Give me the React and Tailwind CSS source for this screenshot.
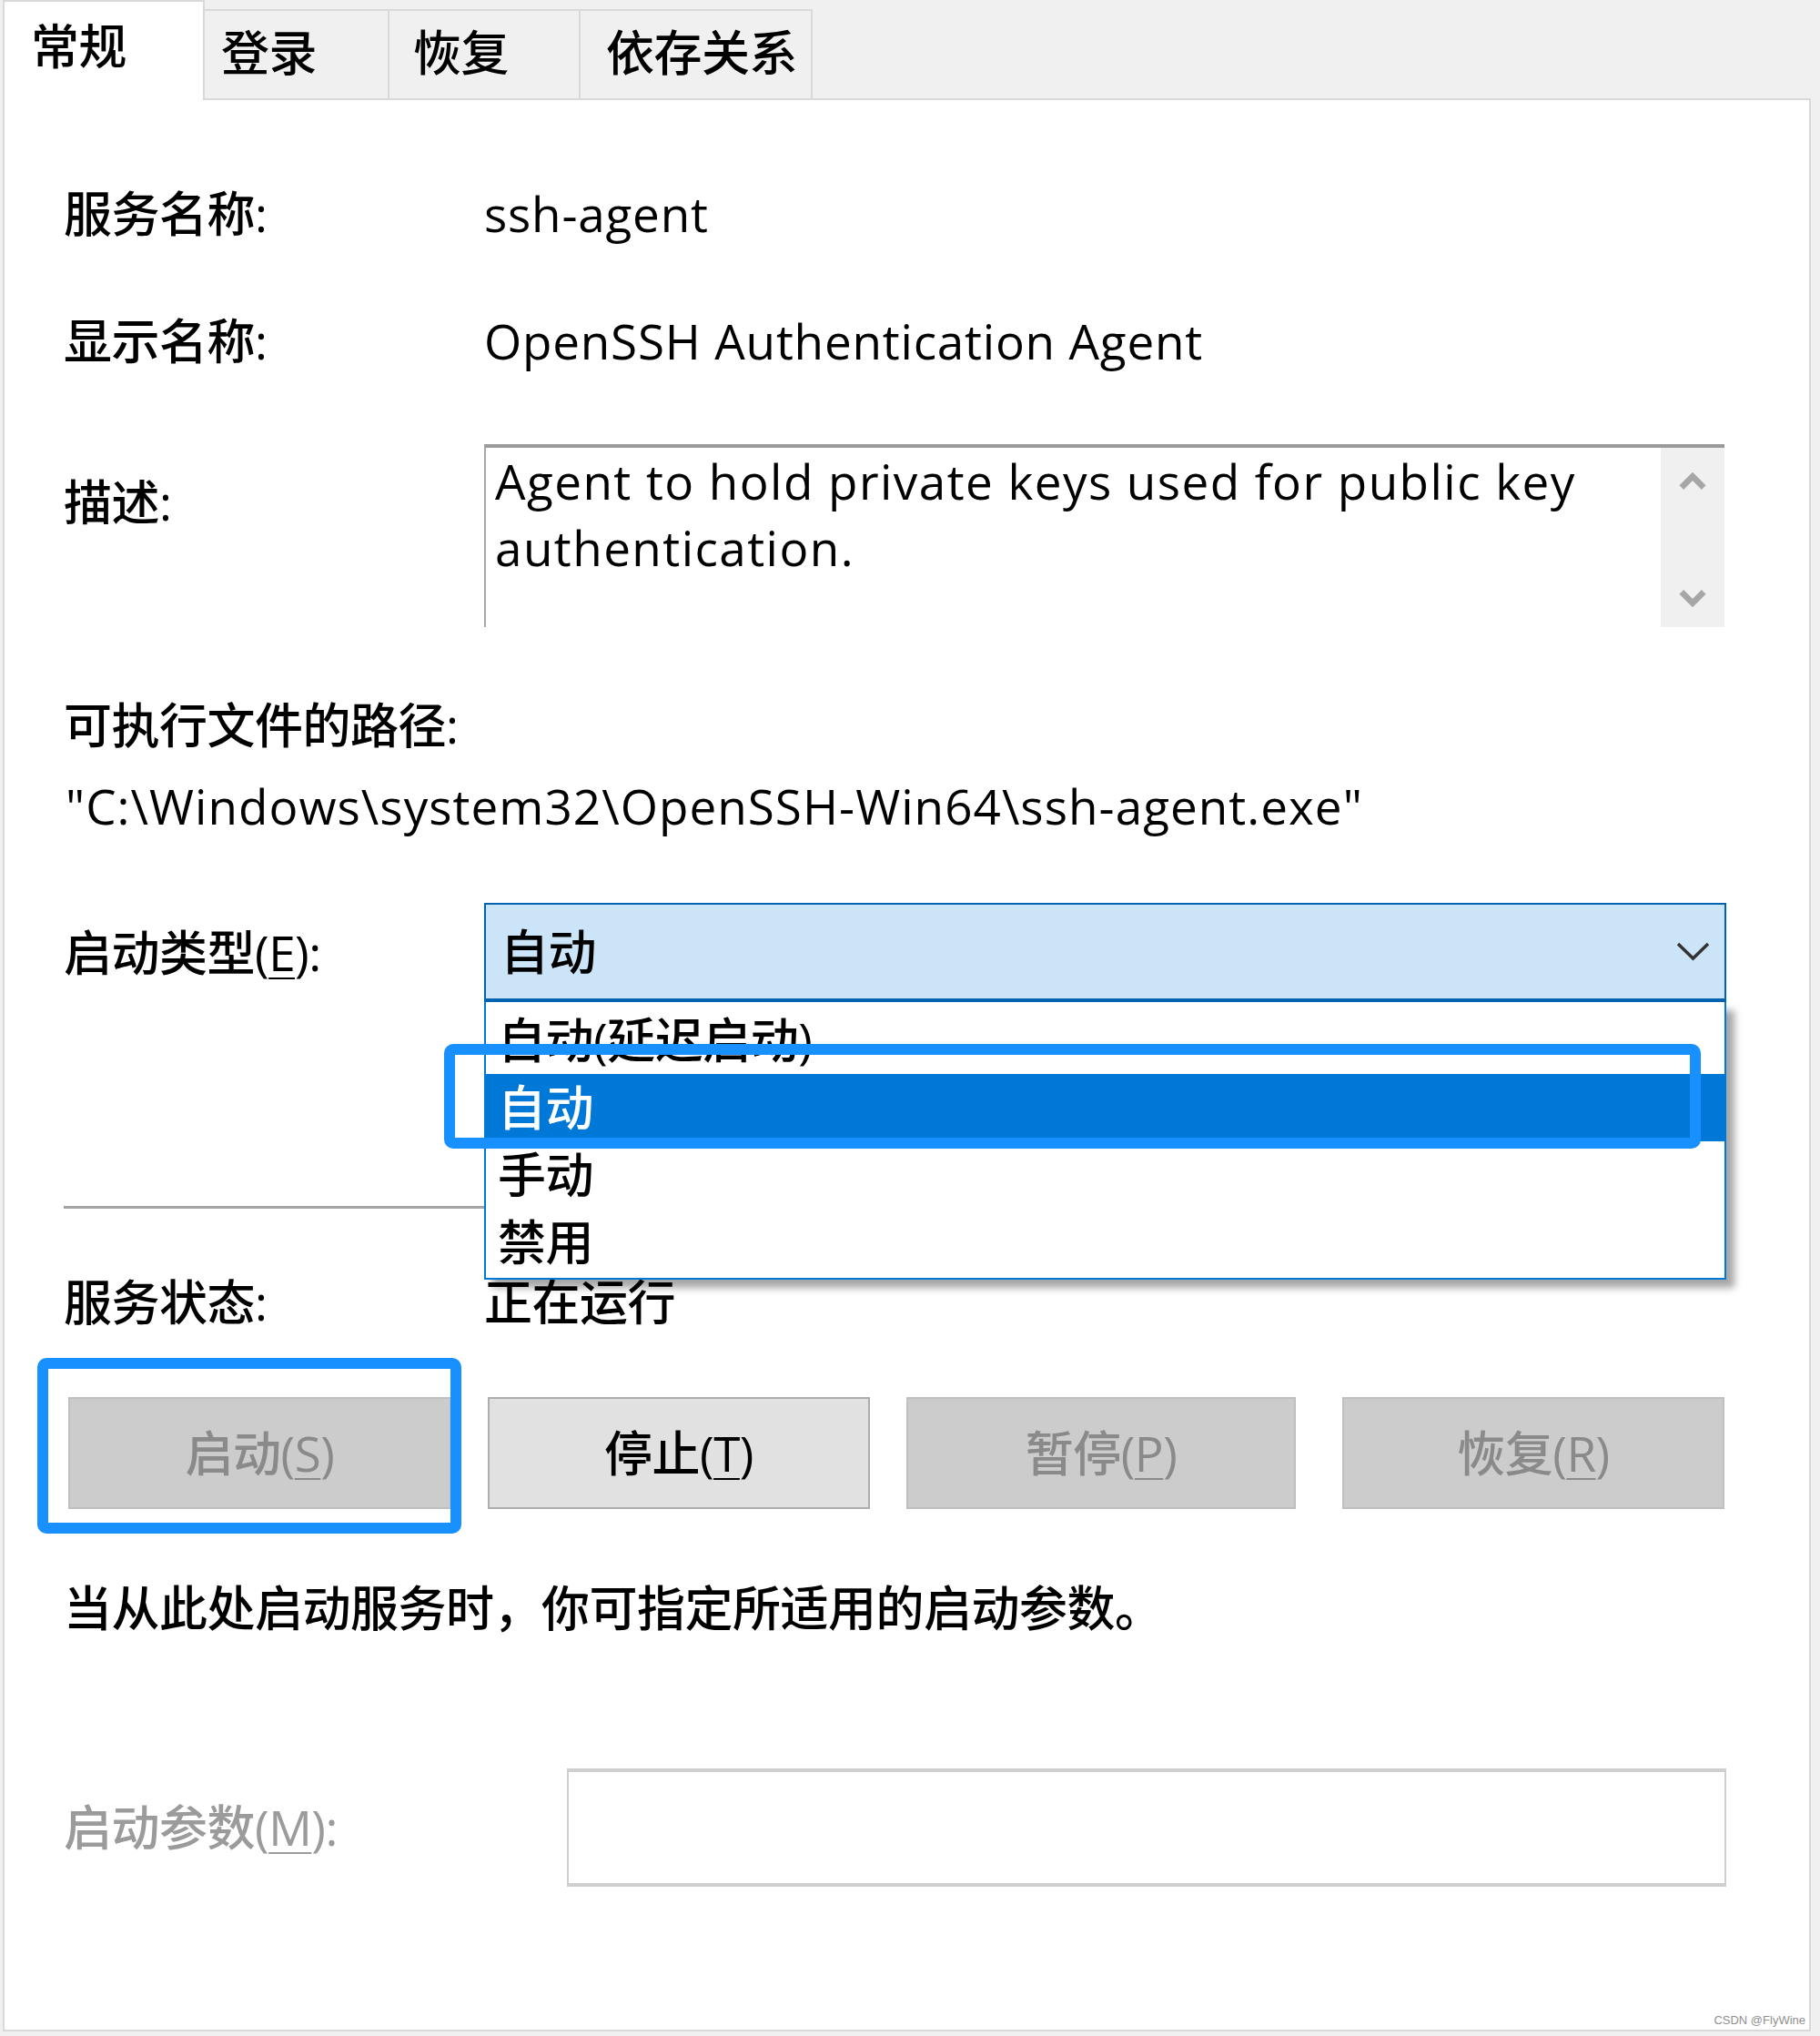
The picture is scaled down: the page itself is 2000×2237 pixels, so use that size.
import React from "react";

const tabs = [
  { name: "常规", active: true, cls: "w-[222px] pl-[29px]" },
  { name: "登录", cls: "w-[203px] pl-[18px]" },
  { name: "恢复", cls: "w-[210px] pl-[26px]" },
  { name: "依存关系", cls: "w-[255px] pl-[28px]" },
];

const startOptions = ["自动(延迟启动)", "自动", "手动", "禁用"];

function Key({ children }) {
  return <span className="underline underline-offset-[7px] decoration-[2px]">{children}</span>;
}

function Chevron({ up, className }) {
  return (
    <svg viewBox="0 0 32 20" className={className} fill="none">
      <polyline
        points={up ? "3,17 16,4 29,17" : "3,3 16,16 29,3"}
        stroke="currentColor"
        strokeWidth="7"
        strokeLinejoin="miter"
      />
    </svg>
  );
}

function FieldRow({ label, children, className = "" }) {
  return (
    <div className={`flex items-center h-[70px] ${className}`}>
      <div className="w-[462px] shrink-0">{label}</div>
      <div>{children}</div>
    </div>
  );
}

function ServiceButton({ label, hotkey, enabled, className = "" }) {
  return (
    <div
      className={`h-[123px] flex items-center justify-center border-2 ${
        enabled
          ? "bg-[#e1e1e1] border-[#adadad] text-black"
          : "bg-[#cccccc] border-[#bfbfbf] text-[#8a8a8a]"
      } ${className}`}
    >
      <span className="leading-[52px]">
        {label}(<Key>{hotkey}</Key>)
      </span>
    </div>
  );
}

export default function App() {
  return (
    <div className="w-[2000px] h-[2237px] bg-[#f0f0f0] pl-[3px] font-['Open_Sans','Noto_Sans_CJK_SC',sans-serif] font-medium text-[53px] leading-[52px] tracking-[-0.5px] text-black overflow-hidden">
      {/* tab strip */}
      <div className="flex items-start h-[108px]">
        {tabs.map((t) =>
          t.active ? (
            <div
              key={t.name}
              className={`relative z-10 h-[110px] bg-white border-2 border-b-0 border-[#d9d9d9] pt-[23px] ${t.cls}`}
            >
              {t.name}
            </div>
          ) : (
            <div
              key={t.name}
              className={`mt-[10px] h-[98px] bg-[#f0f0f0] border-t-2 border-r-2 border-[#d9d9d9] pt-[20px] ${t.cls}`}
            >
              {t.name}
            </div>
          )
        )}
      </div>

      {/* general page */}
      <div className="relative w-[1987px] h-[2124px] bg-white border-2 border-[#d9d9d9] pl-[65px] pr-[91px] pt-[90px] flex flex-col">
        <FieldRow label="服务名称:">
          <span className="tracking-[0.8px]">ssh-agent</span>
        </FieldRow>
        <FieldRow label="显示名称:" className="mt-[70px]">
          <span className="tracking-[0.8px]">OpenSSH Authentication Agent</span>
        </FieldRow>

        <div className="flex mt-[78px]">
          <div className="w-[462px] shrink-0 mt-[29px] h-[70px] flex items-center">描述:</div>
          <div className="w-[1363px] h-[201px] flex border-t-[4px] border-l-2 border-t-[#9a9a9a] border-l-[#a8a8a8]">
            <div className="flex-1 pl-[10px] leading-[73px] tracking-[1.45px]">
              Agent to hold private keys used for public key authentication.
            </div>
            <div className="w-[70px] bg-[#f0f0f0] flex flex-col items-center justify-between pt-[27px] pb-[22px] text-[#a6a6a6]">
              <Chevron up className="w-[30px] h-[20px]" />
              <Chevron className="w-[30px] h-[20px]" />
            </div>
          </div>
        </div>

        <div className="mt-[73px] h-[70px] flex items-center">可执行文件的路径:</div>
        <div className="mt-[19px] h-[70px] flex items-center pl-[2px] tracking-[1.05px]">
          "C:\Windows\system32\OpenSSH-Win64\ssh-agent.exe"
        </div>

        {/* startup type combo with its open list */}
        <div className="flex mt-[71px]">
          <div className="w-[462px] shrink-0 flex items-center">
            启动类型(<Key>E</Key>):
          </div>
          <div className="relative w-[1365px]">
            <div className="h-[109px] flex items-center justify-between bg-[#cce4f7] border-2 border-b-[4px] border-[#0063b1] pl-[16px] pr-[16px]">
              <span>自动</span>
              <svg viewBox="0 0 37 21" className="w-[37px] h-[21px]" fill="none">
                <polyline points="2,2 18.5,18 35,2" stroke="#333333" strokeWidth="3.5" />
              </svg>
            </div>
            <div className="absolute left-0 top-full z-20 w-full h-[305px] bg-white border-2 border-t-0 border-[#0078d7] pt-[5px] shadow-[9px_9px_8px_rgba(0,0,0,0.35)]">
              {startOptions.map((opt) => (
                <div
                  key={opt}
                  className={`h-[74px] flex items-center pl-[13px] ${
                    opt === "自动" ? "bg-[#0078d7] text-white" : ""
                  }`}
                >
                  {opt}
                </div>
              ))}
            </div>
            <div className="absolute -left-[44px] top-[155px] z-30 w-[1381px] h-[115px] border-[12px] border-[#1890ff] rounded-[10px]" />
          </div>
        </div>

        <div className="mt-[224px] h-[3px] bg-[#a4a4a4]" />

        <FieldRow label="服务状态:" className="mt-[68px]">
          正在运行
        </FieldRow>

        <div className="mt-[69px] ml-[5px] flex">
          <div className="relative w-[421px]">
            <ServiceButton label="启动" hotkey="S" />
            <div className="absolute -left-[34px] -top-[43px] w-[466px] h-[193px] border-[12px] border-[#1890ff] rounded-[10px]" />
          </div>
          <ServiceButton label="停止" hotkey="T" enabled className="w-[420px] ml-[40px]" />
          <ServiceButton label="暂停" hotkey="P" className="w-[428px] ml-[40px]" />
          <ServiceButton label="恢复" hotkey="R" className="w-[420px] ml-[51px]" />
        </div>

        <div className="mt-[74px] h-[70px] flex items-center">
          当从此处启动服务时，你可指定所适用的启动参数。
        </div>

        <div className="mt-[141px] flex items-center">
          <div className="w-[553px] shrink-0 text-[#9b9b9b]">
            启动参数(<Key>M</Key>):
          </div>
          <div className="w-[1274px] h-[130px] border-2 border-t-[4px] border-b-[4px] border-[#cfcfcf]" />
        </div>

        <div className="absolute right-[4px] bottom-[2px] font-['Liberation_Sans',sans-serif] font-normal text-[13px] leading-[16px] tracking-normal text-[#8f8f8f]">
          CSDN @FlyWine
        </div>
      </div>
    </div>
  );
}
